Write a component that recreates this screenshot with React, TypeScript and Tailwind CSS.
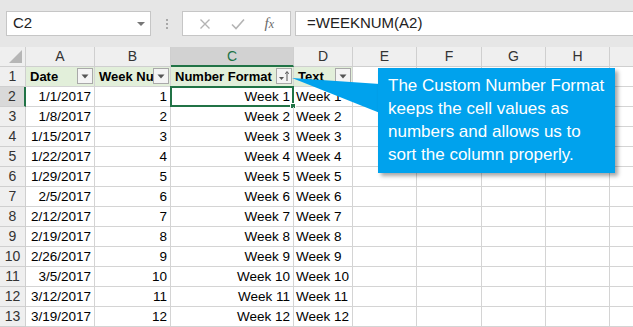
const cols = [
  { key: 'A', w: 'w-[69px]' },
  { key: 'B', w: 'w-[76px]' },
  { key: 'C', w: 'w-[123px]' },
  { key: 'D', w: 'w-[59px]' },
  { key: 'E', w: 'w-[64px]' },
  { key: 'F', w: 'w-[65px]' },
  { key: 'G', w: 'w-[64px]' },
  { key: 'H', w: 'w-[64px]' },
  { key: '', w: 'w-[64px]' },
]

const dates = [
  '1/1/2017', '1/8/2017', '1/15/2017', '1/22/2017', '1/29/2017', '2/5/2017',
  '2/12/2017', '2/19/2017', '2/26/2017', '3/5/2017', '3/12/2017', '3/19/2017',
]

// header labels as they show in the picture (B is cut by its filter button)
const headers = ['Date', 'Week Nu', 'Number Format', 'Text']

function FilterButton({ sorted }: { sorted?: boolean }) {
  return (
    <span className="absolute right-[1px] top-[1px] w-[16px] h-[16px] border border-[#a9a9a9] bg-[#f4f4f4] flex items-center justify-center">
      {sorted ? (
        <svg width="14" height="14" viewBox="0 0 14 14">
          <path d="M2 8h5l-2.5 3z" fill="#555" />
          <path d="M10 12V3M8.3 4.8L10 2.5l1.7 2.3" stroke="#555" strokeWidth="1" fill="none" />
        </svg>
      ) : (
        <svg width="10" height="10" viewBox="0 0 10 10">
          <path d="M1.5 3.5h7L5 7.5z" fill="#555" />
        </svg>
      )}
    </span>
  )
}

export default function App() {
  return (
    <div className="relative w-[633px] h-[327px] overflow-hidden bg-white font-['Liberation_Sans',Arial,sans-serif] text-black select-none">
      {/* Formula bar */}
      <div className="h-[47px] bg-[#e6e6e6] flex items-start pt-[11px] pl-[6px]">
        <div className="w-[145px] h-[25px] bg-white border border-[#c6c6c6] flex items-center justify-between pl-[6px] pr-[4px]">
          <span className="text-[15px] text-[#222]">C2</span>
          <svg width="10" height="8" viewBox="0 0 10 8">
            <path d="M1 2h8L5 6z" fill="#777" />
          </svg>
        </div>
        <div className="w-[31px] h-[25px] flex flex-col items-center justify-center gap-[2px]">
          <span className="w-[2px] h-[2px] bg-[#a8a8a8]" />
          <span className="w-[2px] h-[2px] bg-[#a8a8a8]" />
          <span className="w-[2px] h-[2px] bg-[#a8a8a8]" />
        </div>
        <div className="w-[109px] h-[25px] bg-white border border-[#c6c6c6] flex items-center justify-around px-[6px]">
          <svg width="12" height="12" viewBox="0 0 12 12">
            <path d="M1.5 1.5l9 9M10.5 1.5l-9 9" stroke="#b4b4b4" strokeWidth="1.4" />
          </svg>
          <svg width="14" height="12" viewBox="0 0 14 12">
            <path d="M1 6.5l4 4L13 1.5" stroke="#b4b4b4" strokeWidth="1.6" fill="none" />
          </svg>
          <span className="font-['Liberation_Serif',serif] italic text-[15px] text-[#6a6a6a] leading-none">
            f<span className="text-[12px]">x</span>
          </span>
        </div>
        <div className="ml-[4px] flex-1 h-[25px] bg-white border border-[#c6c6c6] border-r-0 flex items-center pl-[11px]">
          <span className="text-[15px] text-[#222]">=WEEKNUM(A2)</span>
        </div>
      </div>

      {/* Column headers */}
      <div className="flex h-[20px] bg-[#efefef] text-[14px] text-[#333]">
        <div className="relative w-[26px] shrink-0 h-[20px] border-r border-b border-[#cfcfcf]">
          <svg className="absolute right-[3px] bottom-[3px]" width="13" height="13" viewBox="0 0 13 13">
            <path d="M13 0v13H0z" fill="#b6b6b6" />
          </svg>
        </div>
        {cols.map((c, i) => (
          <div
            key={i}
            className={`${c.w} shrink-0 h-[20px] flex items-center justify-center border-r border-[#cfcfcf] ${
              c.key === 'C' ? 'bg-[#d2d2d2] text-[#217346] border-b-2 border-b-[#217346]' : 'border-b border-b-[#cfcfcf]'
            }`}
          >
            {c.key}
          </div>
        ))}
      </div>

      {/* Row 1 - table header */}
      <div className="flex h-[20px] text-[13px]">
        <div className="w-[26px] shrink-0 h-[20px] bg-[#efefef] border-r border-b border-[#cfcfcf] flex items-center justify-center text-[14px] text-[#333]">
          1
        </div>
        {headers.map((t, i) => (
          <div
            key={t}
            className={`${cols[i].w} shrink-0 relative h-[20px] bg-[#e2efda] border-r border-b border-[#d4d4d4] pl-[4px] font-bold leading-[19px] overflow-hidden whitespace-nowrap`}
          >
            {t}
            <FilterButton sorted={i === 2} />
          </div>
        ))}
        {cols.slice(4).map((c, i) => (
          <div key={i} className={`${c.w} shrink-0 h-[20px] border-r border-b border-[#d4d4d4]`} />
        ))}
      </div>

      {/* Data rows */}
      {dates.map((d, i) => {
        const row = i + 2
        const active = row === 2
        return (
          <div key={row} className="flex h-[20px] text-[13.5px] leading-[19px]">
            <div
              className={`w-[26px] shrink-0 h-[20px] border-b border-[#cfcfcf] flex items-center justify-center text-[14px] text-[#333] ${
                active ? 'bg-[#d9d9d9] border-r-2 border-r-[#217346]' : 'bg-[#efefef] border-r border-r-[#cfcfcf]'
              }`}
            >
              {row}
            </div>
            <div className="w-[69px] shrink-0 h-[20px] border-r border-b border-[#d4d4d4] text-right pr-[3px]">{d}</div>
            <div className="w-[76px] shrink-0 h-[20px] border-r border-b border-[#d4d4d4] text-right pr-[3px]">{i + 1}</div>
            <div className="relative w-[123px] shrink-0 h-[20px] border-r border-b border-[#d4d4d4] text-right pr-[3px]">
              Week {i + 1}
              {active && (
                <>
                  <span className="absolute -left-[1px] -top-[1px] -right-[1px] -bottom-[1px] border-2 border-[#217346]" />
                  <span className="absolute -right-[3px] -bottom-[3px] w-[6px] h-[6px] bg-[#217346] border border-white" />
                </>
              )}
            </div>
            <div className="w-[59px] shrink-0 h-[20px] border-r border-b border-[#d4d4d4] pl-[2px] whitespace-nowrap">
              Week {i + 1}
            </div>
            {cols.slice(4).map((c, j) => (
              <div key={j} className={`${c.w} shrink-0 h-[20px] border-r border-b border-[#d4d4d4]`} />
            ))}
          </div>
        )
      })}

      {/* Callout pointer */}
      <svg className="absolute left-0 top-0 pointer-events-none" width="633" height="327" viewBox="0 0 633 327">
        <polygon points="292,78 380,84 380,113" fill="#00a2ed" />
      </svg>

      {/* Callout box */}
      <div className="absolute left-[378px] top-[68px] w-[237px] h-[105px] bg-[#00a2ed] shadow-[3px_3px_4px_rgba(0,0,0,0.35)] pl-[10px] pt-[6px] text-white text-[17px] leading-[23px]">
        The Custom Number Format
        <br />
        keeps the cell values as
        <br />
        numbers and allows us to
        <br />
        sort the column properly.
      </div>
    </div>
  )
}
